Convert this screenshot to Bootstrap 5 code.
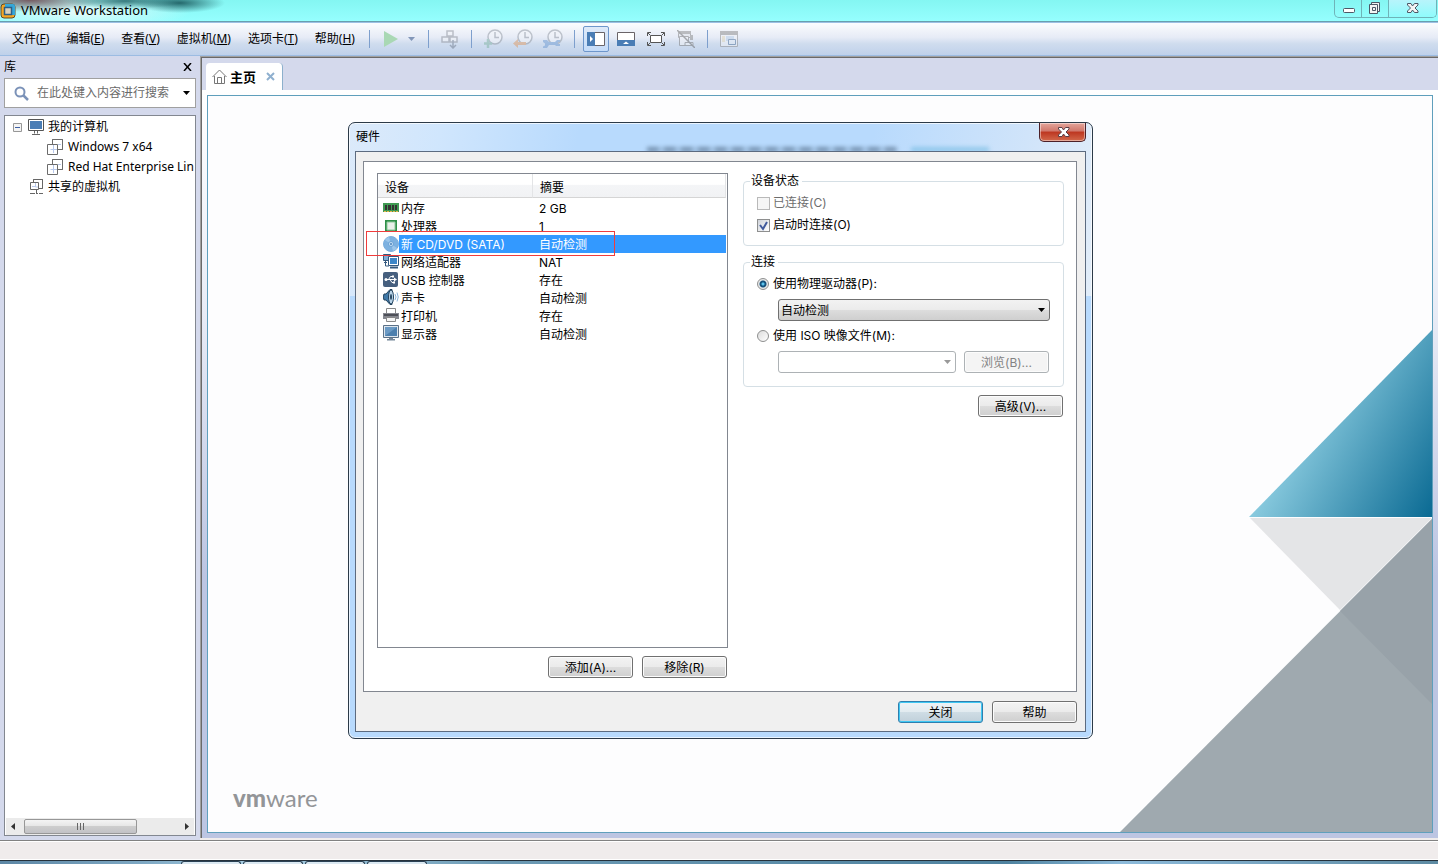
<!DOCTYPE html>
<html lang="zh-CN">
<head>
<meta charset="utf-8">
<meta name="viewport" content="width=device-width, initial-scale=1">
<title>VMware Workstation</title>
<link href="https://cdn.jsdelivr.net/npm/bootstrap@5.3.0/dist/css/bootstrap.min.css" rel="stylesheet">
<style>
body{font-family:"Noto Sans","Noto Sans CJK SC",sans-serif;font-size:12px;line-height:18px;color:#000;background:#f0ecec}
button,input,select{font:inherit;color:inherit}
svg{display:block;flex:none}
.plain{border:0;background:none;padding:0}
/* main window title */
.titlebar{height:23px;border-bottom:1px solid #9cc0e4;box-shadow:inset 0 -1px #6a9eae;
  background:radial-gradient(ellipse 45px 10px at 180px 3px,rgba(20,80,85,.85),transparent),
  radial-gradient(ellipse 60px 8px at 125px 1px,rgba(30,90,95,.8),transparent),
  radial-gradient(ellipse 70px 12px at 30px 0,rgba(110,50,60,.8),transparent),
  radial-gradient(ellipse 110px 18px at 80px 12px,rgba(235,250,250,.95),transparent),
  linear-gradient(#84f6f2,#96ffff)}
.titlebar h1{font-size:13px;line-height:21px;margin:0;font-weight:400}
.winctl{height:18px;margin-right:1px;border:1px solid #6fb3b8;border-top:0;border-radius:0 0 5px 5px;overflow:hidden}
.winctl button{width:27px;border-right:1px solid #6fb3b8}
.winctl button:last-child{width:47px;border:0;background:linear-gradient(#b8f4fb,#8ffcfc)}
/* menu and tools */
.toolstrip{height:33px;background:linear-gradient(#fbfcfe,#e6ebf6 45%,#cfdcee 65%,#bfd1ea);border-bottom:1px solid #9cbce2}
.menus{width:363px;padding-left:12px;gap:17px}
.vsep{width:1px;height:18px;background:#7e9fcd;margin:0 6px}
.tool{width:30px;height:27px;display:flex;align-items:center;justify-content:center}
.tool.on span{width:26px;height:26px;border:1px solid #6d96cb;border-radius:2px;background:linear-gradient(#dfeaf9,#c4dbf8);display:flex;align-items:center;justify-content:center}
.tool:disabled{opacity:.5}
.caret-btn{width:16px;padding-right:6px}
/* library */
.library{width:200px;background:#d4d9ec;padding:0 4px 4px}
.library h2{font-size:12px;line-height:22px;margin:0;font-weight:400}
.searchbox{height:30px;background:#fff;border:1px solid #a0a0a0;margin-bottom:7px;padding:0 5px 0 9px}
.searchbox input{border:0;outline:0;min-width:0;color:#666}
.searchbox input::placeholder{color:#6a6a6a;opacity:1}
.tree{background:#fff;border:1px solid #828790;min-height:0}
.tree ul{padding:1px 0 0;margin:0;list-style:none;overflow:hidden}
.tree li{height:20px;display:flex;align-items:center;white-space:nowrap}
.tree .lvl1{padding-left:8px;gap:3px}.tree .lvl2{padding-left:42px}.tree .shared{padding-left:24px}
.hscroll{height:17px;background:#ebebeb;margin:0 1px}
.thumb{width:113px;height:15px;border:1px solid #979797;border-radius:2px;background:linear-gradient(#f4f4f4,#e6e6e6 45%,#cdcdcd 50%,#c2c2c6)}
/* workspace */
.workspace{border-left:1px solid #a0a0a0;border-top:1px solid #a0a0a0;box-shadow:inset 1px 1px #696969;background:#d4d9ec;padding:1px 0 0 1px;margin-bottom:2px;min-width:0}
.tabrow{height:32px;padding-left:4px}
.hometab{height:27px;width:77px;background:#fff;border-radius:4px 4px 0 0;border-right:1px solid #8cb0cc;font-size:13px;font-weight:700;padding:0 7px 0 6px;gap:3px}
.pageframe{padding:5px;background:linear-gradient(#fff,#e8ecf6 30%,#bcc5e2 65%)}
.page{background:#fdfdfe;border:1px solid #5f9fbc;overflow:hidden}
.brandmark{font-family:Lato,sans-serif;font-size:24px;line-height:24px;color:#939598;margin:0 0 22px 25px;font-weight:400}
.brandmark b{font-weight:900}
.statusbar{height:20px;border-top:1px solid #828282;border-bottom:1px solid #fff;box-shadow:inset 0 1px #fff}
.taskbar{height:4px;border-top:1px solid #26323c;background:linear-gradient(90deg,#5d87a5,#7fa9c4 10%,#a9cfe4 18%,#6c9ab4 35%,#4f83a0 70%,#8dbbdb 78%,#5e8ba3);padding-left:181px;gap:2px;overflow:hidden}
.taskbar i{width:60px;background:#dbe9f2;border:1px solid #2b4255;border-bottom:0;border-radius:3px 3px 0 0}
/* dialog */
.hwdlg{font-family:Inter,"Noto Sans CJK SC",sans-serif;left:348px;top:122px;width:745px;height:617px;border:1px solid #2c3a48;border-radius:7px;padding:0 6px 6px;box-shadow:inset 0 0 0 1px rgba(255,255,255,.7);
  background:linear-gradient(100deg,#dceafa,#d0e6fd 12%,rgba(184,218,253,0) 30%,rgba(184,218,253,0) 68%,#d0e4fa 88%,#e2edf9) top/100% 173px no-repeat,#b8dafd}
.hwtitle{height:28px}
.hwtitle h2{font-size:12px;line-height:28px;margin:0 0 0 1px;font-weight:400}
.smudge{left:298px;top:24px;width:250px;height:5px;background:repeating-linear-gradient(90deg,#48617c 0 10px,#8fb0d2 13px 17px);filter:blur(2px);opacity:.6}
.smudge.pro{left:562px;width:78px;background:#6db8e0}
.hwclose{width:47px;height:19px;border:1px solid #4c2028;border-top:0;border-radius:0 0 5px 5px;background:linear-gradient(#e4a59b,#d0776b 45%,#bd3620 50%,#d2684b);box-shadow:inset 0 0 0 1px rgba(255,255,255,.45)}
.client{background:#f0f0f0;border:1px solid #5c6b80;padding:9px 8px 8px 7px}
.sheet{background:#fff;border:1px solid #828790;padding:11px 12px 13px 13px;height:531px;gap:15px}
.devcol{width:351px}
.devlist{height:475px;border:1px solid #828790}
.devlist table{width:348px;table-layout:fixed;border-collapse:separate;border-spacing:0}
.devlist th{height:24px;font-weight:400;padding:5px 0 0 7px;line-height:18px;background:linear-gradient(#fff 45%,#f4f5f7 50%,#f1f2f4);border-bottom:1px solid #d5d5d5;border-right:1px solid #e3e4e6}
.devlist tbody:before{content:"";display:block;height:1px}
.devlist td{height:18px;padding:2px 0 0 6px;line-height:16px;white-space:nowrap}
.devlist td:first-child{padding:0 0 0 5px}
.devlist td:first-child div{display:flex;height:18px}
.devlist td span{flex:1;padding:2px 0 0 2px;line-height:16px}
.devlist .sel span,.devlist .sel td+td{background:#39f;color:#fff}
.markbox{left:17px;top:108px;width:249px;height:25px;border:1px solid #f03c3c;pointer-events:none}
.wbtn{width:85px;height:22px;line-height:18px;padding:2px 0 0;text-align:center;border:1px solid #707070;border-radius:3px;background:linear-gradient(#f3f3f3,#ebebeb 49%,#ddd 50%,#cfcfcf);box-shadow:inset 0 0 0 1px #fcfcfc}
.wbtn:disabled{border-color:#adb2b5;background:#f4f4f4;color:#838383}
.wbtn.default{border-color:#2f7fae;box-shadow:inset 0 0 0 1px #3fc8f4;background:linear-gradient(#eef3f6,#e2ebf0 49%,#cfdde5 50%,#c0d0da)}
.btnrow{gap:9px;padding-right:1px}
fieldset{border:1px solid #d5dfe5;border-radius:4px;width:321px;padding:3px 13px 9px;margin:0}
fieldset.source{padding-bottom:13px}
fieldset legend{float:none;width:auto;font-size:12px;line-height:16px;height:16px;margin:0 0 0 -7px;padding:0 3px 0 1px}
.opt{height:22px;display:flex;align-items:center;gap:3px}
.opt label{line-height:18px}
.opt input{appearance:none;width:13px;height:13px;margin:0;border:1px solid #8e8f8f;background:linear-gradient(135deg,#dcdcdc,#fff)}
.opt input:disabled{border-color:#b9b9b9;background:#f6f6f6}
.opt input[type=checkbox]:checked{background:url("data:image/svg+xml,%3Csvg xmlns='http://www.w3.org/2000/svg' viewBox='0 0 11 11'%3E%3Cpath d='M2 5l3 4 4-7' fill='none' stroke='%23405a9c' stroke-width='2'/%3E%3C/svg%3E"),linear-gradient(135deg,#cfd3da,#fff)}
.opt input[type=radio]{border-radius:50%;width:12px;height:12px;margin-right:1px}
.opt input[type=radio]:checked{background:radial-gradient(circle,#5bc4ee 0 1px,#15537e 2px 3px,#e8e8e8 4px)}
.combo{height:22px;appearance:none;border:1px solid #707070;border-radius:3px;padding:2px 0 0 2px;width:272px;opacity:1;line-height:18px;
  background:url("data:image/svg+xml,%3Csvg xmlns='http://www.w3.org/2000/svg' width='7' height='4'%3E%3Cpath d='M0 0h7L3.500 4z'/%3E%3C/svg%3E") right 4px center no-repeat,linear-gradient(#f2f2f2,#ebebeb 49%,#ddd 50%,#cfcfcf)}
.combo.off{width:178px;border-color:#adb2b5;background:url("data:image/svg+xml,%3Csvg xmlns='http://www.w3.org/2000/svg' width='7' height='4'%3E%3Cpath d='M0 0h7L3.500 4z' fill='%23999'/%3E%3C/svg%3E") right 4px center no-repeat,#fff}
.indent{padding-left:21px}
</style>
</head>
<body class="vh-100 d-flex flex-column overflow-hidden position-relative">
<svg width="0" height="0" class="position-absolute" aria-hidden="true">
  <defs>
    <symbol id="vm" viewBox="0 0 16 16"><path d="M5.500.5h10v10h-10z" fill="#fff" stroke="#6b6b6b"/><path d="M.5 5.500h10v10H.5z" fill="#fff" stroke="#6b6b6b"/><path d="M6.500 6v4.500H10M3.500 10.500h3V14M11 5.500h3M10.500 1.500" fill="none" stroke="#b8c8ea"/><path d="M5.500 5V.5h10v10H11" fill="none" stroke="#6b6b6b"/></symbol>
    <symbol id="clock" viewBox="0 0 20 20"><circle cx="12" cy="8" r="7" fill="#f3f5f9" stroke="#8e959f" stroke-width="1.500"/><path d="M12 3v5.500h4" fill="none" stroke="#8e959f" stroke-width="1.500"/></symbol>
  </defs>
</svg>

<header class="titlebar d-flex justify-content-between flex-shrink-0">
  <div class="d-flex gap-1">
    <svg width="17" height="20" viewBox="0 0 17 20"><rect x="1" y="4" width="14" height="14" rx="3" fill="#f5a623" stroke="#5b4a2a"/><path d="M5 4h8q2 0 2 2v9h-3V7H5z" fill="#35a7d8"/><rect x="4.500" y="7.500" width="7" height="7" fill="#d9d2c0" stroke="#2d5f86" stroke-width="1.500"/></svg>
    <h1>VMware Workstation</h1>
  </div>
  <div class="winctl d-flex">
    <button class="plain" aria-label="最小化"><svg width="27" height="17" viewBox="0 0 27 17"><rect x="8.500" y="8.500" width="11" height="4" rx="1" fill="#fff" stroke="#4c5766"/></svg></button>
    <button class="plain" aria-label="还原"><svg width="26" height="17" viewBox="0 0 26 17"><g fill="#f4f4f4" stroke="#4c5766"><path d="M9.500 2.500h8v9h-8z"/><path d="M7.500 4.500h8v9h-8z"/><path d="M10.500 7.500h3v3h-3z"/></g></svg></button>
    <button class="plain" aria-label="关闭窗口"><svg width="46" height="17" viewBox="0 0 46 17"><path d="M18.500 3.500H22L23.500 6l2-2.500H29v1.500L26 8l3 3v1.500h-3.500l-2-2.500-1.500 2.500h-3.500V11l3-3-3-3z" fill="#f4f4f4" stroke="#4c5766"/></svg></button>
  </div>
</header>

<nav class="toolstrip d-flex align-items-center flex-shrink-0">
  <div class="menus d-flex">
    <button class="plain">文件(<u>F</u>)</button><button class="plain">编辑(<u>E</u>)</button><button class="plain">查看(<u>V</u>)</button><button class="plain">虚拟机(<u>M</u>)</button><button class="plain">选项卡(<u>T</u>)</button><button class="plain">帮助(<u>H</u>)</button>
  </div>
  <span class="vsep"></span>
  <button class="plain tool" aria-label="开机"><svg width="14" height="16" viewBox="0 0 14 16"><path d="M0 0l14 8-14 8z" fill="#a9d8b4"/></svg></button>
  <button class="plain tool caret-btn" aria-label="电源选项"><svg width="7" height="4"><path d="M0 0h7L3.500 4z" fill="#8296b8"/></svg></button>
  <span class="vsep"></span>
  <button class="plain tool" disabled aria-label="发送"><svg width="18" height="20" viewBox="0 0 18 20"><g fill="#f2f4f8" stroke="#8b8f98" stroke-width="1.500"><path d="M6 2h6v5H6zM1 8h7v5H1zM9 8h7v5H9z"/></g><path d="M12 11v8M9 16l3 3 3-3" fill="none" stroke="#6e7a8c" stroke-width="1.500"/></svg></button>
  <span class="vsep"></span>
  <button class="plain tool" disabled aria-label="拍摄快照"><svg width="20" height="20" viewBox="0 0 20 20"><use href="#clock"/><path d="M5 10v9M1 14.500h8" stroke="#7fb3a2" stroke-width="2.500"/></svg></button>
  <button class="plain tool" disabled aria-label="恢复快照"><svg width="20" height="20" viewBox="0 0 20 20"><use href="#clock"/><path d="M0 14.500l5-4.500v3h8v3H5v3z" fill="#dc9a66"/></svg></button>
  <button class="plain tool" disabled aria-label="管理快照"><svg width="20" height="20" viewBox="0 0 20 20"><use href="#clock"/><path d="M0 11h4l2 2h6l2-2h3v2h-2v2h2v2h-4l-1-1H6l-2 3H0v-1.500l2-1v-2L0 13z" fill="#6d9ad2"/></svg></button>
  <span class="vsep"></span>
  <button class="plain tool on" aria-label="显示库"><span><svg width="18" height="14" viewBox="0 0 18 14"><path d="M.5.5h17v13H.5z" fill="#fff" stroke="#6a6468"/><path d="M0 0h8v14H0z" fill="#4a7db5"/><path d="M3 4l3 3-3 3z" fill="#fff"/></svg></span></button>
  <button class="plain tool" aria-label="显示缩略图"><svg width="18" height="14" viewBox="0 0 18 14"><path d="M.5.5h17v13H.5z" fill="#fff" stroke="#6a6468"/><path d="M0 8h18v6H0z" fill="#4a7db5"/><path d="M6 12l3-2.500 3 2.500z" fill="#fff"/></svg></button>
  <button class="plain tool" aria-label="全屏"><svg width="18" height="14" viewBox="0 0 18 14"><path d="M3.500 3.500h11v7h-11z" fill="#fff" stroke="#555" /><path d="M.5 4V.5H4M14 .5h3.500V4M17.500 10v3.500H14M4 13.500H.5V10M1 1l2 2M17 1l-2 2M1 13l2-2M17 13l-2-2" fill="none" stroke="#555"/></svg></button>
  <button class="plain tool" disabled aria-label="Unity"><svg width="18" height="18" viewBox="0 0 18 18"><path d="M1.500 2.500h12v5h-12z" fill="#e2e5ea" stroke="#777"/><path d="M1 1h13v3H1zM13 5h3v5h-3z" fill="#888"/><path d="M2.500 6.500h9v9h-9z" fill="#f3f4f7" stroke="#777"/><path d="M8 12.500h8v3H8z" fill="#f3f4f7" stroke="#777"/><path d="M0 0l18 18" stroke="#666" stroke-width="1.500"/></svg></button>
  <span class="vsep"></span>
  <button class="plain tool" disabled aria-label="控制台视图"><svg width="18" height="16" viewBox="0 0 18 16"><path d="M.5.5h17v15H.5z" fill="#f0f2f6" stroke="#888"/><path d="M0 0h18v4H0z" fill="#888"/><path d="M2 6h3M2 8h3M2 10h3" stroke="#d8bf7a"/><path d="M6 5h8v5H6z" fill="#b9d0ea"/><path d="M8.500 8.500h7v5h-7z" fill="#e2ebf5" stroke="#4a6d96"/></svg></button>
</nav>

<main class="d-flex flex-grow-1" style="min-height:0">
  <aside class="library d-flex flex-column flex-shrink-0">
    <div class="d-flex justify-content-between align-items-center pe-1"><h2>库</h2>
      <button class="plain" aria-label="关闭库"><svg width="9" height="8" viewBox="0 0 9 8"><path d="M1 0l7 8M8 0L1 8" stroke="#000" stroke-width="1.500"/></svg></button></div>
    <div class="searchbox d-flex align-items-center justify-content-between">
      <svg width="15" height="15" viewBox="0 0 15 15"><circle cx="6" cy="6" r="4.500" fill="none" stroke="#7b92b8" stroke-width="2"/><path d="M9 9l5 5" stroke="#7b92b8" stroke-width="2.500"/></svg>
      <input class="flex-grow-1 ms-2 p-0" type="text" placeholder="在此处键入内容进行搜索" aria-label="搜索">
      <button class="plain" aria-label="搜索选项"><svg width="7" height="4"><path d="M0 0h7L3.500 4z"/></svg></button>
    </div>
    <div class="tree flex-grow-1 d-flex flex-column">
      <ul class="flex-grow-1">
        <li class="lvl1"><svg width="9" height="9" viewBox="0 0 9 9"><path d="M.5.5h8v8h-8z" fill="#f4f4f4" stroke="#979797"/><path d="M2 4.500h5" stroke="#3d5fa5"/></svg>
          <svg width="20" height="16" viewBox="-3 0 20 16"><path d="M.5.5h15v11H.5z" fill="#fff" stroke="#555"/><path d="M2 2h12v8H2z" fill="#4a7db5"/><path d="M6.500 12v2.500M9.500 12v2.500M4 15.500h8" stroke="#666"/></svg>我的计算机</li>
        <li class="lvl2"><svg class="me-1" width="17" height="16"><use href="#vm" width="16" height="16"/></svg>Windows 7 x64</li>
        <li class="lvl2"><svg class="me-1" width="17" height="16"><use href="#vm" width="16" height="16"/></svg>Red Hat Enterprise Lin</li>
        <li class="shared"><svg class="me-1" width="15" height="16" viewBox="0 0 15 16"><path d="M4.500.5h9v9h-9z" fill="#fff" stroke="#666"/><path d="M1.500 3.500h8v7h-8z" fill="#fff" stroke="#666"/><path d="M6.500 4v4H9M3 7.500h3" fill="none" stroke="#b8c8ea"/><path d="M4.500 3V.5h9v9H10M7.500 11v3M1 14.500h5M7 14.500h2M10 14.500h4" fill="none" stroke="#666"/></svg>共享的虚拟机</li>
      </ul>
      <div class="hscroll d-flex align-items-center justify-content-between px-1">
        <svg width="6" height="7"><path d="M5 0v7L1 3.500z" fill="#333"/></svg>
        <div class="flex-grow-1 mx-2"><div class="thumb d-flex align-items-center justify-content-center"><svg width="8" height="7"><path d="M.5 0v7M3.500 0v7M6.500 0v7" stroke="#666"/></svg></div></div>
        <svg width="6" height="7"><path d="M1 0v7l4-3.500z" fill="#333"/></svg>
      </div>
    </div>
  </aside>
  <section class="workspace d-flex flex-column flex-grow-1">
    <div class="tabrow d-flex align-items-end">
      <div class="hometab d-flex align-items-center">
        <svg width="15" height="15" viewBox="0 0 15 15"><path d="M.5 8L7.500 1l7 7M2.500 7v7.500h10V7M5.500 14.500v-6h4v6" fill="none" stroke="#777"/></svg>
        <span>主页</span>
        <button class="plain ms-auto" aria-label="关闭标签"><svg width="9" height="9" viewBox="0 0 9 9"><path d="M1 1l7 7M8 1L1 8" stroke="#8fb0cf" stroke-width="2"/></svg></button>
      </div>
    </div>
    <div class="pageframe flex-grow-1 d-flex">
      <div class="page flex-grow-1 d-flex justify-content-between align-items-end">
        <div class="brandmark"><b>vm</b>ware</div>
        <svg width="332" height="502" viewBox="0 0 332 502">
          <defs><linearGradient id="sea" gradientUnits="userSpaceOnUse" x1="190" y1="110" x2="332" y2="187"><stop offset="0" stop-color="#8acbdf"/><stop offset="1" stop-color="#0a6a93"/></linearGradient></defs>
          <path d="M332 0v187H149z" fill="url(#sea)"/>
          <path d="M150 188h182l-92 92z" fill="#e4e5e7"/>
          <path d="M332 189v313H20z" fill="#9fa9af"/>
          <path d="M332 189v185l-92-93z" fill="#98a2a9"/>
        </svg>
      </div>
    </div>
  </section>
</main>
<footer class="flex-shrink-0"><div class="statusbar"></div><div class="taskbar d-flex"><i></i><i></i><i></i><i></i></div></footer>

<div class="hwdlg position-absolute d-flex flex-column" role="dialog" aria-labelledby="hwname">
  <div class="smudge position-absolute"></div><div class="smudge pro position-absolute"></div>
  <div class="hwtitle d-flex justify-content-between align-items-start flex-shrink-0">
    <h2 id="hwname">硬件</h2>
    <button class="plain hwclose" aria-label="关闭对话框"><svg width="45" height="18" viewBox="0 0 45 18"><path d="M18.500 4.500H22L23.500 7l2-2.500H29V6l-3 3 3 3v1.500h-3.500l-2-2.500-1.500 2.500h-3.500V12l3-3-3-3z" fill="#fff" stroke="#5a3d45"/></svg></button>
  </div>
  <div class="client flex-grow-1 position-relative">
    <div class="sheet d-flex">
      <div class="devcol">
        <div class="devlist">
          <table>
            <colgroup><col style="width:155px"><col></colgroup>
            <thead><tr><th>设备</th><th>摘要</th></tr></thead>
            <tbody>
              <tr><td><div><svg width="16" height="16" viewBox="0 0 16 16"><path d="M0 4h16v9H0z" fill="#3f9a52"/><path d="M2 6h2v5H2zM5 6h3v5H5zM9 6h2v5H9zM12 6h2v5h-2z" fill="#333"/><path d="M1 12.500h14" stroke="#e6b44a" stroke-dasharray="2 1"/></svg><span>内存</span></div></td><td>2 GB</td></tr>
              <tr><td><div><svg width="16" height="16" viewBox="0 0 16 16"><path d="M2 3h12v12H2z" fill="#2f8f48"/><path d="M4 5h8v8H4z" fill="#e9efe9" stroke="#8fc79c"/></svg><span>处理器</span></div></td><td>1</td></tr>
              <tr class="sel"><td><div><svg width="16" height="18" viewBox="0 -1 16 18"><circle cx="8" cy="8" r="7.500" fill="#7db1e0" stroke="#7aaedd"/><path d="M8 8L2 4a7 7 0 0 1 4-3zM8 8l6 4a7 7 0 0 1-4 3z" fill="#9cc6ea"/><circle cx="8" cy="8" r="2.500" fill="#c4def4" stroke="#6aa2d6"/><circle cx="8" cy="8" r="1" fill="#4b83bb"/></svg><span>新 CD/DVD (SATA)</span></div></td><td>自动检测</td></tr>
              <tr><td><div><svg width="16" height="16" viewBox="0 0 16 16"><path d="M.5 1.500h7v6h-7z" fill="#7faed6" stroke="#34597f"/><path d="M2.500 8v5H6M1 9.500h3" fill="none" stroke="#34597f"/><path d="M5.500 3.500h10v9h-10z" fill="#fff" stroke="#34597f"/><path d="M7 5h7v6H7z" fill="#3d86c8"/><path d="M7 14.500h8" stroke="#34597f" stroke-width="2"/></svg><span>网络适配器</span></div></td><td>NAT</td></tr>
              <tr><td><div><svg width="16" height="16" viewBox="0 0 16 16"><rect y="1" width="15" height="15" rx="2" fill="#465f7e"/><path d="M3 8.500h10M5.500 8.500l2-3H10M7 8.500l2 3h2" fill="none" stroke="#fff"/><circle cx="3" cy="8.500" r="1.500" fill="#fff"/><path d="M11 6.500l3 2-3 2zM9 4.500h2v2H9zM10 10.500h2v2h-2z" fill="#fff"/></svg><span>USB 控制器</span></div></td><td>存在</td></tr>
              <tr><td><div><svg width="16" height="16" viewBox="0 0 16 16"><path d="M1 5h2l4-4.500h2v15H7L3 11H1Q-.5 8 1 5z" fill="#4079a8" stroke="#24445f"/><ellipse cx="8" cy="8" rx="2.500" ry="7" fill="#b8d3e8" stroke="#24445f"/><ellipse cx="8" cy="8" rx="1" ry="3" fill="#24445f"/><path d="M12 5q2 3 0 6M14 3.500q2.500 4.500 0 9" fill="none" stroke="#8ab5dc"/></svg><span>声卡</span></div></td><td>自动检测</td></tr>
              <tr><td><div><svg width="16" height="16" viewBox="0 0 16 16"><path d="M3.500 1.500h9v5h-9z" fill="#fff" stroke="#888"/><path d="M0 6h16v6H0z" fill="#85878f"/><path d="M1 8h14" stroke="#3c3e46" stroke-width="1.500"/><path d="M3.500 10.500h9v4h-9z" fill="#f5f5f5" stroke="#888"/></svg><span>打印机</span></div></td><td>存在</td></tr>
              <tr><td><div><svg width="16" height="16" viewBox="0 0 16 16"><path d="M.5.5h15v12H.5z" fill="#dfe6ee" stroke="#5b7187"/><path d="M2 2h12v9H2z" fill="#4c7fae"/><path d="M2 2h12L2 11z" fill="#6b9ac4"/><path d="M6 13h4v1h2v1.500H4V14h2z" fill="#75879a"/></svg><span>显示器</span></div></td><td>自动检测</td></tr>
            </tbody>
          </table>
        </div>
        <div class="btnrow d-flex justify-content-end mt-2"><button class="wbtn">添加(A)...</button><button class="wbtn">移除(R)</button></div>
      </div>
      <div class="d-flex flex-column align-items-end flex-grow-1">
        <fieldset><legend>设备状态</legend>
          <div class="opt" style="color:#6d6d6d"><input type="checkbox" id="c1" disabled><label for="c1">已连接(C)</label></div>
          <div class="opt"><input type="checkbox" id="c2" checked><label for="c2">启动时连接(O)</label></div>
        </fieldset>
        <fieldset class="source mt-2"><legend>连接</legend>
          <div class="opt mb-1"><input type="radio" name="src" id="r1" checked><label for="r1">使用物理驱动器(P):</label></div>
          <div class="indent"><select class="combo d-block" aria-label="物理驱动器"><option>自动检测</option></select></div>
          <div class="opt my-1"><input type="radio" name="src" id="r2"><label for="r2">使用 ISO 映像文件(M):</label></div>
          <div class="indent d-flex gap-2"><select class="combo off" disabled aria-label="ISO 映像文件"><option></option></select><button class="wbtn" disabled>浏览(B)...</button></div>
        </fieldset>
        <div class="btnrow mt-2"><button class="wbtn">高级(V)...</button></div>
      </div>
    </div>
    <div class="d-flex justify-content-end" style="gap:9px;margin-top:9px"><button class="wbtn default">关闭</button><button class="wbtn">帮助</button></div>
  </div>
  <div class="markbox position-absolute"></div>
</div>
<script src="https://cdn.jsdelivr.net/npm/bootstrap@5.3.0/dist/js/bootstrap.bundle.min.js"></script>
</body>
</html>
